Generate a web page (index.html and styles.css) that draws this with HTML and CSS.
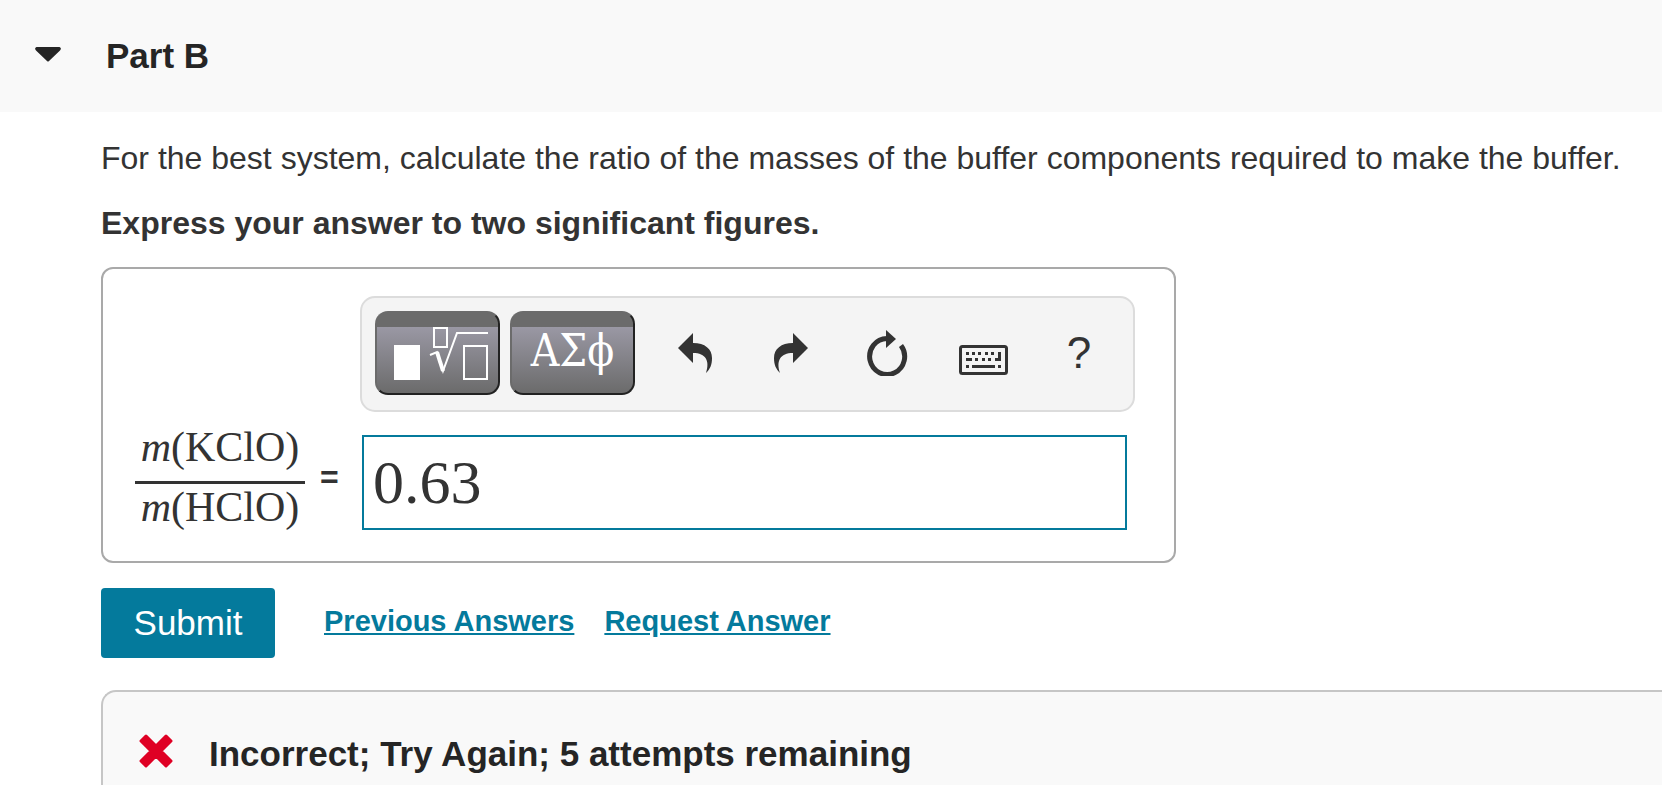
FILE: index.html
```html
<!DOCTYPE html>
<html lang="en">

<head>
    <meta charset="UTF-8">
    <meta name="viewport" content="width=device-width, initial-scale=1.0">
    <title>Part B</title>
    <link rel="stylesheet" href="styles.css">
</head>

<body>
    <header class="part-header">
        <button class="toggle" type="button" aria-label="Collapse Part B" aria-expanded="true">
            <svg width="26" height="15" viewBox="0 0 26 15">
                <path d="M1.500 0h23Q27 1 25 3.500L14 14q-1 1-2 0L1 3.500Q-1 1 1.500 0z" fill="#252525" />
            </svg>
        </button>
        <h2>Part B</h2>
    </header>

    <main>
        <p>For the best system, calculate the ratio of the masses of the buffer components required to make the buffer.</p>
        <p class="instructions">Express your answer to two significant figures.</p>

        <form>
            <div class="answer-box">
                <div class="toolbar">
                    <button class="palette" type="button" aria-label="Templates">
                        <svg width="100" height="56" viewBox="0 0 100 56">
                            <path d="M6 20h26v35H6z" fill="#fff" />
                            <g fill="none" stroke="#fff">
                                <path d="M46 3h13v19H46zM76 21h23v33H76z" stroke-width="2" />
                                <path d="M42 30l7-3 6 19L69 8h31" stroke-width="2" />
                                <path d="M49 27l6 19" stroke-width="4" />
                            </g>
                        </svg>
                    </button>
                    <button class="palette symbols" type="button" aria-label="Symbols">ΑΣϕ</button>
                    <button class="tool" type="button" aria-label="Undo">
                        <svg width="34" height="40" viewBox="0 0 34 40">
                            <path d="M0 15L15 0v10c12 0 19 6 19 15 0 7-2 11-6 15 4-12 0-20-13-20v10z" fill="#333" />
                        </svg>
                    </button>
                    <button class="tool" type="button" aria-label="Redo">
                        <svg width="34" height="40" viewBox="0 0 34 40">
                            <path d="M34 15L19 0v10C7 10 0 16 0 25c0 7 2 11 6 15C2 28 6 20 19 20v10z" fill="#333" />
                        </svg>
                    </button>
                    <button class="tool" type="button" aria-label="Reset">
                        <svg width="42" height="46" viewBox="0 0 42 46">
                            <path d="M21 8.500A17.500 18 0 1 0 35 15.500" fill="none" stroke="#333" stroke-width="5" />
                            <path d="M20 0l10 9-10 9z" fill="#333" />
                        </svg>
                    </button>
                    <button class="tool keyboard" type="button" aria-label="Keyboard shortcuts">
                        <svg width="49" height="30" viewBox="0 0 49 30">
                            <rect x="1.500" y="1.500" width="46" height="27" rx="2" fill="none" stroke="#333" stroke-width="3" />
                            <path d="M7 7h3v3H7zm6 0h3v3h-3zm6 0h3v3h-3zm7 0h3v3h-3zm6 0h3v3h-3zM7 13h6v3H7zm9 0h3v3h-3zm7 0h3v3h-3zm6 0h3v3h-3zM39 7h3v9h-6v-3h3zM7 20h3v3H7zm6 0h23v3H13zm26 0h3v3h-3z" fill="#333" />
                        </svg>
                    </button>
                    <button class="tool help" type="button" aria-label="Help">?</button>
                </div>

                <label class="expression" for="answer">
                    <span class="fraction">
                        <span class="numerator"><i>m</i>(KClO)</span>
                        <span class="denominator"><i>m</i>(HClO)</span>
                    </span>
                    <span class="equals">=</span>
                </label>
                <input class="answer" id="answer" type="text" value="0.63">
            </div>

            <div class="actions">
                <button class="submit" type="submit">Submit</button>
                <div class="links">
                    <a href="#previous">Previous Answers</a>
                    <a href="#request">Request Answer</a>
                </div>
            </div>
        </form>

        <section class="feedback">
            <svg width="34" height="34" viewBox="0 0 34 34">
                <path d="M7 2L2 7l10 10L2 27l5 5 10-10 10 10 5-5-10-10L32 7l-5-5-10 10z" fill="#df0024" stroke="#df0024" stroke-width="3" stroke-linejoin="round" />
            </svg>
            <h3>Incorrect; Try Again; 5 attempts remaining</h3>
        </section>
    </main>
</body>

</html>
```
FILE: styles.css
```css
* {
    box-sizing: border-box;
}

body {
    margin: 0;
    background: #fff;
    color: #333;
    font-family: "Liberation Sans", Arial, sans-serif;
    font-size: 32px;
    line-height: 38px;
}

h2,
h3 {
    margin: 0;
    color: #252525;
    font-size: 35px;
    line-height: 40px;
}

button {
    margin: 0;
    padding: 0;
    border: 0;
    background: none;
    color: inherit;
    font-family: inherit;
    cursor: pointer;
}

svg {
    display: block;
}

.part-header {
    display: flex;
    align-items: center;
    height: 112px;
    padding-left: 35px;
    background: #f9f9f9;
}

.toggle {
    width: 71px;
    padding-bottom: 3px;
}

main {
    padding: 27px 0 0 101px;
}

p {
    margin: 0 0 27px;
}

.instructions {
    margin-bottom: 25px;
    font-weight: bold;
}

.answer-box {
    display: grid;
    grid-template-columns: 257px 1fr;
    row-gap: 12px;
    max-width: 1075px;
    padding: 27px 39px 31px 0;
    border: 2px solid #a9a9a9;
    border-radius: 12px;
}

.toolbar {
    grid-column: 2;
    display: flex;
    padding: 13px 6px 15px 13px;
    border: 2px solid #dcdcdc;
    border-radius: 15px;
    background: #f4f4f4;
}

.palette {
    display: flex;
    align-items: center;
    justify-content: center;
    flex: none;
    width: 125px;
    height: 84px;
    margin-right: 10px;
    border: 2px solid;
    border-color: #6b6b6b #222 #222 #6b6b6b;
    border-radius: 13px;
    background: linear-gradient(#6b6b6b 14px, #9a98a4 14px, #6b6b6b);
    color: #fff;
}

.symbols {
    margin-right: 12px;
    padding-bottom: 4px;
    font-family: "DejaVu Serif Condensed", "DejaVu Serif", serif;
    font-size: 44px;
    line-height: 48px;
}

.tool {
    display: flex;
    align-items: center;
    justify-content: center;
    flex: 1;
}

.keyboard {
    padding-top: 14px;
}

.help {
    font-size: 44px;
}

.expression {
    display: flex;
    align-items: center;
    padding-left: 32px;
}

.fraction {
    width: 170px;
    font-family: "Liberation Serif", "Times New Roman", serif;
    font-size: 42px;
    line-height: 46px;
    text-align: center;
}

.numerator,
.denominator {
    display: block;
}

.numerator {
    padding-bottom: 11px;
    border-bottom: 3px solid #333;
}

.equals {
    margin-left: 15px;
    font-weight: bold;
}

.answer {
    align-self: end;
    min-width: 0;
    height: 95px;
    margin: 0 8px 0 2px;
    padding: 0 9px;
    border: 2px solid #047a9c;
    outline: 0;
    background: #fff;
    color: #333;
    font-family: "Liberation Serif", "Times New Roman", serif;
    font-size: 62px;
}

.actions {
    display: flex;
    align-items: center;
    gap: 49px;
    margin: 25px 0 32px;
}

.submit {
    width: 174px;
    height: 70px;
    border-radius: 4px;
    background: #047a9c;
    color: #fff;
    font-size: 35px;
}

.links {
    display: flex;
    gap: 30px;
    padding-bottom: 4px;
    font-size: 29px;
    font-weight: bold;
}

.links a {
    color: #047a9c;
}

.feedback {
    display: flex;
    align-items: flex-start;
    gap: 36px;
    padding: 42px 36px 11px;
    border: solid #c6c6c6;
    border-width: 2px 0 0 2px;
    border-radius: 15px 0 0 0;
    background: #f9f9f9;
}
```
